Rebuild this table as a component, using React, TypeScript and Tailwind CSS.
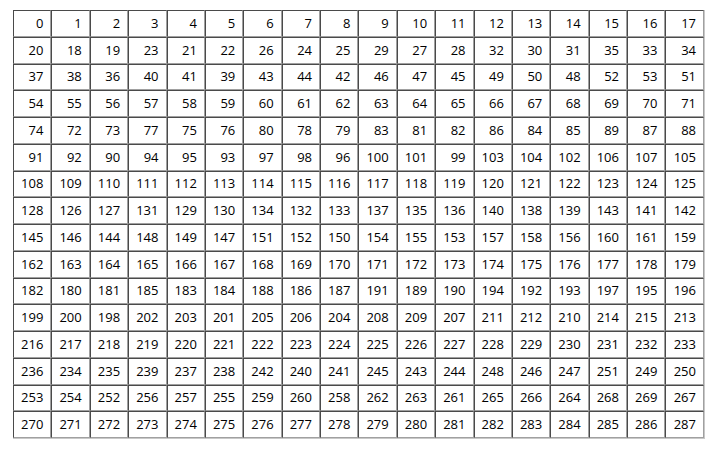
import React from "react";

const rows: number[][] = [
  [0, 1, 2, 3, 4, 5, 6, 7, 8, 9, 10, 11, 12, 13, 14, 15, 16, 17],
  [20, 18, 19, 23, 21, 22, 26, 24, 25, 29, 27, 28, 32, 30, 31, 35, 33, 34],
  [37, 38, 36, 40, 41, 39, 43, 44, 42, 46, 47, 45, 49, 50, 48, 52, 53, 51],
  [54, 55, 56, 57, 58, 59, 60, 61, 62, 63, 64, 65, 66, 67, 68, 69, 70, 71],
  [74, 72, 73, 77, 75, 76, 80, 78, 79, 83, 81, 82, 86, 84, 85, 89, 87, 88],
  [91, 92, 90, 94, 95, 93, 97, 98, 96, 100, 101, 99, 103, 104, 102, 106, 107, 105],
  [108, 109, 110, 111, 112, 113, 114, 115, 116, 117, 118, 119, 120, 121, 122, 123, 124, 125],
  [128, 126, 127, 131, 129, 130, 134, 132, 133, 137, 135, 136, 140, 138, 139, 143, 141, 142],
  [145, 146, 144, 148, 149, 147, 151, 152, 150, 154, 155, 153, 157, 158, 156, 160, 161, 159],
  [162, 163, 164, 165, 166, 167, 168, 169, 170, 171, 172, 173, 174, 175, 176, 177, 178, 179],
  [182, 180, 181, 185, 183, 184, 188, 186, 187, 191, 189, 190, 194, 192, 193, 197, 195, 196],
  [199, 200, 198, 202, 203, 201, 205, 206, 204, 208, 209, 207, 211, 212, 210, 214, 215, 213],
  [216, 217, 218, 219, 220, 221, 222, 223, 224, 225, 226, 227, 228, 229, 230, 231, 232, 233],
  [236, 234, 235, 239, 237, 238, 242, 240, 241, 245, 243, 244, 248, 246, 247, 251, 249, 250],
  [253, 254, 252, 256, 257, 255, 259, 260, 258, 262, 263, 261, 265, 266, 264, 268, 269, 267],
  [270, 271, 272, 273, 274, 275, 276, 277, 278, 279, 280, 281, 282, 283, 284, 285, 286, 287],
];

export default function App() {
  return (
    <div className="w-[716px] h-[455px] bg-white pt-[10px] pl-[13px] font-['Open_Sans',sans-serif]">
      <table className="table-fixed border-separate border-spacing-0 w-[692px] h-[429px] border-r border-b border-r-[#c8c8c8] border-b-[#c8c8c8] text-[13px] text-black">
        <tbody>
          {rows.map((r, i) => (
            <tr key={i}>
              {r.map((n, j) => (
                <td
                  key={j}
                  className="border border-t-[#4a4a4a] border-l-[#4a4a4a] border-r-[#a0a0a0] border-b-[#a0a0a0] text-right pr-[7px] align-middle leading-none p-0"
                >
                  {n}
                </td>
              ))}
            </tr>
          ))}
        </tbody>
      </table>
    </div>
  );
}
